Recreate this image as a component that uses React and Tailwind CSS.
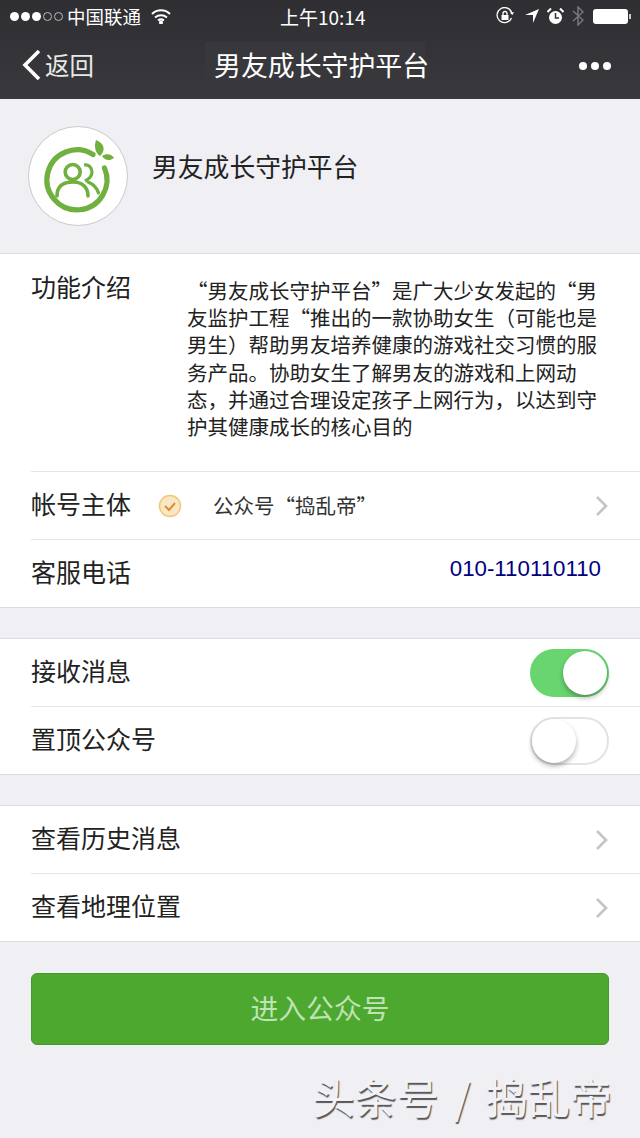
import React from "react";

const introLines = [
  "“男友成长守护平台”是广大少女发起的“男",
  "友监护工程“推出的一款协助女生（可能也是",
  "男生）帮助男友培养健康的游戏社交习惯的服",
  "务产品。协助女生了解男友的游戏和上网动",
  "态，并通过合理设定孩子上网行为，以达到守",
  "护其健康成长的核心目的",
];

const Chevron = () => (
  <svg width="14" height="22" viewBox="0 0 14 22" fill="none" className="shrink-0">
    <path d="M2 2l9 9-9 9" stroke="#c4c4c8" strokeWidth="2.6" />
  </svg>
);

const Logo = () => (
  <svg width="100" height="100" viewBox="0 0 100 100" fill="none" className="shrink-0">
    <circle cx="50" cy="50" r="49.5" fill="#fff" stroke="#c9c9c9" />
    <path d="M65 28.500A30 30 0 1 0 76.500 42" stroke="#70b03e" strokeWidth="5.2" strokeLinecap="round" />
    <circle cx="44.700" cy="46" r="7.500" stroke="#70b03e" strokeWidth="3.6" />
    <path d="M29 70C29 60 35 56 45 56C55 56 60 62 60 70" stroke="#70b03e" strokeWidth="3.6" strokeLinecap="round" />
    <path d="M56 39C61 38 64 42 64 46C64 50 61 53 57 55" stroke="#70b03e" strokeWidth="3.2" />
    <path d="M60 56C65 58 69 62 70.500 67" stroke="#70b03e" strokeWidth="3.2" strokeLinecap="round" />
    <path d="M68 14C75 17 79 23 72 30C67 27 66 20 68 14Z" fill="#70b03e" />
    <path d="M74 30C78 27 84 28 86 32C82 35 77 35 74 30Z" fill="#70b03e" />
  </svg>
);

const Toggle = ({ on }) => (
  <div
    className={`relative h-[48px] w-[79px] rounded-full border-2 ${
      on ? "border-[#68d56f] bg-[#68d56f]" : "border-[#e3e3e5] bg-white"
    }`}
  >
    <div
      className={`absolute top-0 h-[44px] w-[44px] rounded-full bg-white shadow-[0_3px_5px_rgba(0,0,0,0.3)] ${
        on ? "right-0" : "left-0"
      }`}
    />
  </div>
);

const Row = ({ label, children, last }) => (
  <div className={`ml-[31px] flex items-center pr-[31px] ${last ? "h-[67px]" : "h-[68px] border-b border-[#e6e6e8]"}`}>
    <span className="mb-[3px] text-[25px] text-[#222]">{label}</span>
    <div className="ml-auto flex items-center">{children}</div>
  </div>
);

export default function App() {
  return (
    <div className="flex h-[1138px] w-[640px] flex-col overflow-hidden bg-[#efeff4] font-['Noto_Sans_CJK_SC',sans-serif]">
      <div className="h-[99px] shrink-0 bg-gradient-to-b from-[#2e2e33] to-[#39393d] text-white">
        {/* status bar */}
        <div className="flex h-[32px] items-center pl-[10px] pr-[9px]">
          <div className="flex w-[230px] items-center">
            <div className="flex gap-[2px]">
              <span className="h-[9px] w-[9px] rounded-full bg-white" />
              <span className="h-[9px] w-[9px] rounded-full bg-white" />
              <span className="h-[9px] w-[9px] rounded-full bg-white" />
              <span className="h-[9px] w-[9px] rounded-full border border-[#bbb]" />
              <span className="h-[9px] w-[9px] rounded-full border border-[#bbb]" />
            </div>
            <span className="ml-[4px] text-[18.5px] leading-none">中国联通</span>
            <svg width="20" height="15" viewBox="0 0 20 15" fill="none" stroke="#fff" strokeWidth="2" className="ml-[10px]">
              <path d="M1 5c5-5 13-5 18 0" />
              <path d="M4 8.500c3.500-3 8.500-3 12 0" />
              <path d="M7 11.500c2-1.500 4-1.500 6 0" />
              <circle cx="10" cy="13.500" r="1" fill="#fff" />
            </svg>
          </div>
          <span className="ml-[40px] text-[19px] leading-none">上午10:14</span>
          <div className="ml-auto flex items-center gap-[8px]">
            <svg width="18" height="18" viewBox="0 0 18 18" fill="none" stroke="#fff" strokeWidth="1.300" className="mr-[3px]">
              <path d="M15.500 11A7.500 7.500 0 1 1 16 7" />
              <path d="M14 6l2.500 2 1.500-3" fill="#fff" stroke="none" />
              <rect x="5.500" y="8" width="7" height="5" fill="#fff" stroke="none" />
              <path d="M7 8V6.500a2 2 0 0 1 4 0V8" />
            </svg>
            <svg width="14" height="14" viewBox="0 0 14 14" fill="#fff">
              <path d="M14 0L8 14V6H0Z" />
            </svg>
            <svg width="17" height="17" viewBox="0 0 17 17" fill="none">
              <circle cx="8.500" cy="9.500" r="6.500" fill="#fff" />
              <path d="M8.500 5v5H12" stroke="#333" strokeWidth="1.500" />
              <path d="M0.500 4L4 0.500M16.500 4L13 0.500" stroke="#fff" strokeWidth="2" />
            </svg>
            <svg width="12" height="20" viewBox="0 0 12 20" fill="none" stroke="#77777b" strokeWidth="1.500">
              <path d="M1 5l10 9-5 5V1l5 5L1 15" />
            </svg>
            <div className="ml-[1px] flex items-center">
              <div className="h-[15px] w-[35px] rounded-[3px] bg-white" />
              <div className="ml-[1px] h-[5px] w-[2px] bg-[#ccc]" />
            </div>
          </div>
        </div>
        {/* nav bar */}
        <div className="flex h-[67px] items-center pl-[22px] pr-[29px]">
          <svg width="20" height="32" viewBox="0 0 20 32" fill="none" stroke="#fff" strokeWidth="3.600" className="mt-[-1px]">
            <path d="M17 2L3 16l14 14" />
          </svg>
          <span className="ml-[3px] text-[24.5px] leading-none text-[#e8e8e8]">返回</span>
          <div className="ml-[111px] flex h-[47px] w-[220px] items-center bg-[#38383c] pl-[9px]">
            <span className="whitespace-nowrap text-[26.9px] leading-none">男友成长守护平台</span>
          </div>
          <div className="ml-auto flex gap-[4px]">
            <span className="h-[8px] w-[8px] rounded-full bg-white" />
            <span className="h-[8px] w-[8px] rounded-full bg-white" />
            <span className="h-[8px] w-[8px] rounded-full bg-white" />
          </div>
        </div>
      </div>

      {/* profile */}
      <div className="flex h-[155px] shrink-0 items-center border-b border-[#dcdce0] pl-[28px]">
        <Logo />
        <span className="ml-[24px] mt-[-20px] text-[25.8px] text-[#222]">男友成长守护平台</span>
      </div>

      {/* info */}
      <div className="shrink-0 border-b border-[#dcdce0] bg-white">
        <div className="ml-[31px] flex h-[218px] border-b border-[#e6e6e8] pt-[17px]">
          <span className="text-[25px] leading-[30px] text-[#222]">功能介绍</span>
          <div className="ml-[56px] pt-[6px] text-[20.500px] leading-[27.200px] text-[#222]">
            {introLines.map((line) => (
              <div key={line} className="whitespace-nowrap">
                {line}
              </div>
            ))}
          </div>
        </div>
        <div className="ml-[31px] flex h-[68px] items-center border-b border-[#e6e6e8] pr-[31px]">
          <span className="mb-[3px] text-[25px] text-[#222]">帐号主体</span>
          <svg width="24" height="24" viewBox="0 0 24 24" fill="none" className="ml-[27px]">
            <circle cx="12" cy="12" r="10.500" fill="#f9e7c4" stroke="#f0c878" strokeWidth="1.500" />
            <path d="M7 12l4 4 6-7" stroke="#e08a3a" strokeWidth="2" />
          </svg>
          <span className="ml-[31px] text-[20.500px] text-[#333]">公众号“捣乱帝”</span>
          <div className="ml-auto">
            <Chevron />
          </div>
        </div>
        <Row label="客服电话" last>
          <span className="mb-[10px] mr-[8px] font-['Liberation_Sans',sans-serif] text-[22.300px] text-[#000080]">010-110110110</span>
        </Row>
      </div>

      <div className="mt-[30px] shrink-0 border-y border-[#dcdce0] bg-white">
        <Row label="接收消息">
          <Toggle on />
        </Row>
        <Row label="置顶公众号" last>
          <Toggle />
        </Row>
      </div>

      <div className="mt-[30px] shrink-0 border-y border-[#dcdce0] bg-white">
        <Row label="查看历史消息">
          <Chevron />
        </Row>
        <Row label="查看地理位置" last>
          <Chevron />
        </Row>
      </div>

      <div className="mx-[31px] mt-[31px] flex h-[72px] shrink-0 items-center justify-center rounded-[6px] border border-[#46982c] bg-[#4ca82f]">
        <span className="mb-[2px] text-[27.800px] text-[#c0e2b4]">进入公众号</span>
      </div>

      <div className="mr-[28px] mt-[20px] self-end text-[42px] leading-[62px] text-[#f2f2f6] [text-shadow:1px_2px_1px_#555] [word-spacing:6px]">
        头条号 / 捣乱帝
      </div>
    </div>
  );
}
